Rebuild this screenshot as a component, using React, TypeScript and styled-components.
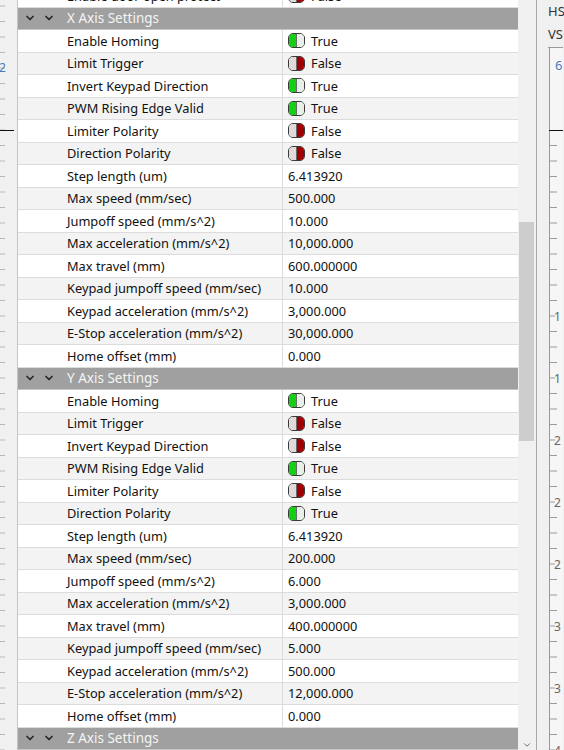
import React from "react";
import styled, { createGlobalStyle } from "styled-components";
import { ChevronDown } from "lucide-react";

const GlobalStyle = createGlobalStyle`
  html, body {
    margin: 0;
    padding: 0;
    background: #f0f0f0;
    overflow: hidden;
  }
  body {
    font-family: "Noto Sans", "Open Sans", sans-serif;
  }
`;

const ROW_H = 22.5;

const Page = styled.div`
  display: flex;
  width: 564px;
  height: 750px;
  overflow: hidden;
  background: #f0f0f0;
`;

const SideRuler = styled.div`
  width: 17px;
  flex-shrink: 0;
  border-right: 1px solid #c4c4c4;
  background: #f0f0f0;
`;

const Tree = styled.div`
  width: 500px;
  flex-shrink: 0;
  background: #ffffff;
  overflow: hidden;
`;

const TreeInner = styled.div`
  margin-top: -15px;
`;

const Header = styled.div`
  display: flex;
  align-items: center;
  height: ${ROW_H}px;
  box-sizing: border-box;
  background: #a0a0a0;
  border-bottom: 1px solid #c6c6c6;
  color: #f4f4f4;
  font-size: 13.5px;
`;

const Chevrons = styled.div`
  display: flex;
  align-items: center;
  gap: 7px;
  width: 49px;
  box-sizing: border-box;
  padding-left: 6px;
  color: #2a2a2a;
`;

const Row = styled.div<{ $alt: boolean }>`
  display: flex;
  height: ${ROW_H}px;
  box-sizing: border-box;
  background: ${(p) => (p.$alt ? "#f3f3f3" : "#ffffff")};
  border-bottom: 1px solid #dcdcdc;
  font-size: 12.8px;
  color: #111;
`;

const Label = styled.div`
  width: 265px;
  flex-shrink: 0;
  box-sizing: border-box;
  padding-left: 49px;
  display: flex;
  align-items: center;
  border-right: 1px solid #dcdcdc;
  white-space: nowrap;
`;

const Value = styled.div`
  flex: 1;
  display: flex;
  align-items: center;
  padding-left: 5px;
  gap: 6px;
  white-space: nowrap;
`;

const Toggle = styled.span<{ $on: boolean }>`
  display: inline-flex;
  width: 17px;
  height: 15px;
  box-sizing: border-box;
  border: 1.5px solid #3a3a3a;
  border-radius: 5px;
  overflow: hidden;

  &::before,
  &::after {
    content: "";
    flex: 1;
  }
  &::before {
    background: ${(p) => (p.$on ? "#12d012" : "#e2dada")};
  }
  &::after {
    background: ${(p) => (p.$on ? "#e6f0e6" : "#a00000")};
    border-left: 1px solid #6a6a6a;
  }
`;

const Scrollbar = styled.div`
  width: 19px;
  flex-shrink: 0;
  background: #f0f0f0;
  box-sizing: border-box;
  padding: 222px 2px 0 1px;
  display: flex;
  flex-direction: column;
  align-items: stretch;
  border-right: 1px solid #a8a8a8;
`;

const Thumb = styled.div`
  height: 219px;
  background: #cdcdcd;
`;

const ScrollArrow = styled.div`
  margin-top: auto;
  height: 10px;
  display: flex;
  justify-content: center;
  color: #555;
`;

const RightPanel = styled.div`
  flex: 1;
  position: relative;
  background: #f0f0f0;
  display: flex;
  flex-direction: column;
`;

const PanelLabel = styled.div`
  position: relative;
  height: 23px;
  line-height: 23px;
  padding-left: 11px;
  font-size: 13px;
  color: #333;
  white-space: nowrap;
`;

type Item = { label: string; bool?: boolean; value?: string };

const xAxis: Item[] = [
  { label: "Enable Homing", bool: true },
  { label: "Limit Trigger", bool: false },
  { label: "Invert Keypad Direction", bool: true },
  { label: "PWM Rising Edge Valid", bool: true },
  { label: "Limiter Polarity", bool: false },
  { label: "Direction Polarity", bool: false },
  { label: "Step length (um)", value: "6.413920" },
  { label: "Max speed (mm/sec)", value: "500.000" },
  { label: "Jumpoff speed (mm/s^2)", value: "10.000" },
  { label: "Max acceleration (mm/s^2)", value: "10,000.000" },
  { label: "Max travel (mm)", value: "600.000000" },
  { label: "Keypad jumpoff speed (mm/sec)", value: "10.000" },
  { label: "Keypad acceleration (mm/s^2)", value: "3,000.000" },
  { label: "E-Stop acceleration (mm/s^2)", value: "30,000.000" },
  { label: "Home offset (mm)", value: "0.000" },
];

const yAxis: Item[] = [
  { label: "Enable Homing", bool: true },
  { label: "Limit Trigger", bool: false },
  { label: "Invert Keypad Direction", bool: false },
  { label: "PWM Rising Edge Valid", bool: true },
  { label: "Limiter Polarity", bool: false },
  { label: "Direction Polarity", bool: true },
  { label: "Step length (um)", value: "6.413920" },
  { label: "Max speed (mm/sec)", value: "200.000" },
  { label: "Jumpoff speed (mm/s^2)", value: "6.000" },
  { label: "Max acceleration (mm/s^2)", value: "3,000.000" },
  { label: "Max travel (mm)", value: "400.000000" },
  { label: "Keypad jumpoff speed (mm/sec)", value: "5.000" },
  { label: "Keypad acceleration (mm/s^2)", value: "500.000" },
  { label: "E-Stop acceleration (mm/s^2)", value: "12,000.000" },
  { label: "Home offset (mm)", value: "0.000" },
];

function PropRow({ item, alt }: { item: Item; alt: boolean }) {
  return (
    <Row $alt={alt}>
      <Label>{item.label}</Label>
      <Value>
        {item.bool !== undefined ? (
          <>
            <Toggle $on={item.bool} />
            {item.bool ? "True" : "False"}
          </>
        ) : (
          item.value
        )}
      </Value>
    </Row>
  );
}

function SectionHeader({ title }: { title: string }) {
  return (
    <Header>
      <Chevrons>
        <ChevronDown size={12} strokeWidth={3.5} />
        <ChevronDown size={12} strokeWidth={3.5} />
      </Chevrons>
      {title}
    </Header>
  );
}

function Section({ title, items }: { title: string; items: Item[] }) {
  return (
    <>
      <SectionHeader title={title} />
      {items.map((it, i) => (
        <PropRow key={it.label} item={it} alt={i % 2 === 1} />
      ))}
    </>
  );
}

const ticks = Array.from({ length: 49 }, (_, i) => 130 + (i - 8) * 15.5);

function LeftRulerDrawing() {
  return (
    <svg width="16" height="750">
      {ticks.map((y) => (
        <line key={y} x1="0" x2="5" y1={y} y2={y} stroke="#b8b8b8" strokeWidth="1" />
      ))}
      <line x1="0" x2="14" y1="130.5" y2="130.5" stroke="#111" strokeWidth="1" />
      <text x="-1" y="72" fontSize="12" fill="#4a7bbf" fontFamily="Noto Sans, sans-serif">
        2
      </text>
    </svg>
  );
}

const digits: Record<number, string> = { 12: "1", 16: "1", 20: "2", 24: "2", 28: "2", 32: "3", 36: "3", 40: "4" };

function RightRulerDrawing() {
  return (
    <svg width="26" height="750" style={{ position: "absolute", left: 0, top: 0 }}>
      <rect x="12.5" y="47" width="14" height="703" fill="#f6f6f6" />
      <line x1="12.5" x2="12.5" y1="47" y2="750" stroke="#9a9a9a" strokeWidth="1" />
      <line x1="11" x2="26" y1="47.5" y2="47.5" stroke="#9a9a9a" strokeWidth="1" />
      <text x="18" y="70" fontSize="13" fill="#4a7bbf" fontFamily="Noto Sans, sans-serif">
        6
      </text>
      <line x1="12" x2="26" y1="130.5" y2="130.5" stroke="#111" strokeWidth="1" />
      {Array.from({ length: 41 }, (_, k) => {
        const y = 130 + k * 15.5;
        return (
          <g key={k}>
            {k > 0 && <line x1="12.5" x2={digits[k] ? "18" : "20"} y1={y} y2={y} stroke="#9a9a9a" strokeWidth="1" />}
            {digits[k] && (
              <text x="17" y={y + 5} fontSize="12" fill="#666" fontFamily="Noto Sans, sans-serif">
                {digits[k]}
              </text>
            )}
          </g>
        );
      })}
    </svg>
  );
}

export default function App() {
  return (
    <>
      <GlobalStyle />
      <Page>
        <SideRuler>
          <LeftRulerDrawing />
        </SideRuler>
        <Tree>
          <TreeInner>
            <PropRow item={{ label: "Enable door open protect", bool: false }} alt={false} />
            <Section title="X Axis Settings" items={xAxis} />
            <Section title="Y Axis Settings" items={yAxis} />
            <SectionHeader title="Z Axis Settings" />
          </TreeInner>
        </Tree>
        <Scrollbar>
          <Thumb />
          <ScrollArrow>
            <ChevronDown size={10} strokeWidth={2} />
          </ScrollArrow>
        </Scrollbar>
        <RightPanel>
          <RightRulerDrawing />
          <PanelLabel>HS</PanelLabel>
          <PanelLabel>VS</PanelLabel>
        </RightPanel>
      </Page>
    </>
  );
}
